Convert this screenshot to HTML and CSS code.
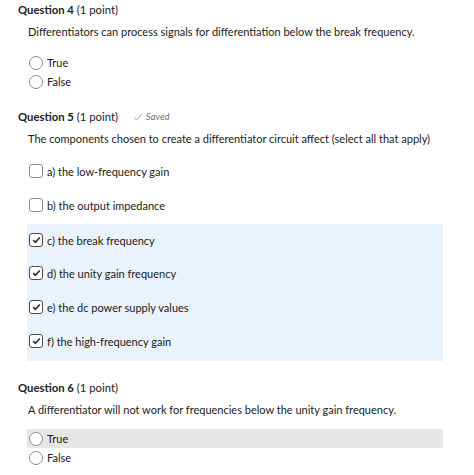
FILE: index.html
```html
<!DOCTYPE html>
<html>
<head>
<meta charset="utf-8">
<link rel="stylesheet" href="styles.css">
</head>
<body>
<div class="page">
  <section class="q q4">
    <h2 class="qh"><b>Question 4</b> (1 point)</h2>
    <p class="prompt">Differentiators can process signals for differentiation below the break frequency.</p>
    <div class="opts radios">
      <div class="ro"><span class="radio"></span><span>True</span></div>
      <div class="ro"><span class="radio"></span><span>False</span></div>
    </div>
  </section>

  <section class="q q5">
    <h2 class="qh"><b>Question 5</b> (1 point) <span class="saved"><svg width="10" height="8" viewBox="0 0 10 8"><path d="M1 4.5 L3.6 7 L9 1" fill="none" stroke="#a0a0a0" stroke-width="1"/></svg>Saved</span></h2>
    <p class="prompt">The components chosen to create a differentiator circuit affect (select all that apply)</p>
    <div class="checks">
      <div class="co"><span class="cb"></span><span>a) the low-frequency gain</span></div>
      <div class="co"><span class="cb"></span><span>b) the output impedance</span></div>
      <div class="sel">
        <div class="co"><span class="cb on"><svg width="9" height="8" viewBox="0 0 9 8"><path d="M1.2 4.2 L3.4 6.3 L7.8 1.5" fill="none" stroke="#2b2b2b" stroke-width="1.6"/></svg></span><span>c) the break frequency</span></div>
        <div class="co"><span class="cb on"><svg width="9" height="8" viewBox="0 0 9 8"><path d="M1.2 4.2 L3.4 6.3 L7.8 1.5" fill="none" stroke="#2b2b2b" stroke-width="1.6"/></svg></span><span>d) the unity gain frequency</span></div>
        <div class="co"><span class="cb on"><svg width="9" height="8" viewBox="0 0 9 8"><path d="M1.2 4.2 L3.4 6.3 L7.8 1.5" fill="none" stroke="#2b2b2b" stroke-width="1.6"/></svg></span><span>e) the dc power supply values</span></div>
        <div class="co"><span class="cb on"><svg width="9" height="8" viewBox="0 0 9 8"><path d="M1.2 4.2 L3.4 6.3 L7.8 1.5" fill="none" stroke="#2b2b2b" stroke-width="1.6"/></svg></span><span>f) the high-frequency gain</span></div>
      </div>
    </div>
  </section>

  <section class="q q6">
    <h2 class="qh"><b>Question 6</b> (1 point)</h2>
    <p class="prompt">A differentiator will not work for frequencies below the unity gain frequency.</p>
    <div class="opts radios">
      <div class="ro hover"><span class="radio"></span><span>True</span></div>
      <div class="ro"><span class="radio"></span><span>False</span></div>
    </div>
  </section>
</div>
</body>
</html>
```

FILE: styles.css
```css
html, body {
  margin: 0;
  padding: 0;
  background: #ffffff;
}
body {
  font-family: Lato, "Open Sans", sans-serif;
  color: #2b2d2f;
  font-size: 11px;
}
.page {
  padding: 2px 0 0 18px;
  width: 425px;
}
.qh {
  margin: 0;
  font-size: 11.3px;
  font-weight: normal;
  line-height: 16px;
  color: #202122;
}
.qh b {
  font-weight: 700;
}
.saved {
  margin-left: 12px;
  font-style: italic;
  font-size: 9.5px;
  color: #6e7376;
  display: inline-flex;
  align-items: center;
  gap: 3px;
}
.prompt {
  margin: 6px 0 0 10px;
  font-size: 11px;
  line-height: 16px;
  color: #202122;
}
.radios {
  margin: 13px 0 0 9px;
  display: flex;
  flex-direction: column;
}
.q6 .radios {
  margin-top: 11px;
}
.ro {
  display: flex;
  align-items: center;
  gap: 4px;
  height: 19px;
  padding-left: 2px;
  font-size: 11px;
  color: #202122;
}
.ro.hover {
  background: #e6e6e6;
}
.radio {
  width: 12px;
  height: 12px;
  border: 1px solid #8a8d8f;
  border-radius: 50%;
  background: #fff;
  box-sizing: content-box;
}
.q5 {
  margin-top: 18px;
}
.q6 {
  margin-top: 19px;
}
.checks {
  margin: 7px 0 0 9px;
}
.co {
  display: flex;
  align-items: center;
  gap: 4px;
  height: 34px;
  padding-left: 2px;
  font-size: 11px;
  color: #202122;
}
.sel {
  background: #eaf2fb;
  margin-top: 2px;
  padding-bottom: 3px;
}
.sel .co:first-child {
  height: 32px;
}
.cb {
  width: 12px;
  height: 12px;
  border: 1px solid #8a8d8f;
  border-radius: 3px;
  background: #fff;
  display: flex;
  align-items: center;
  justify-content: center;
}
.cb.on {
  border-color: #4a4d4f;
}
```
